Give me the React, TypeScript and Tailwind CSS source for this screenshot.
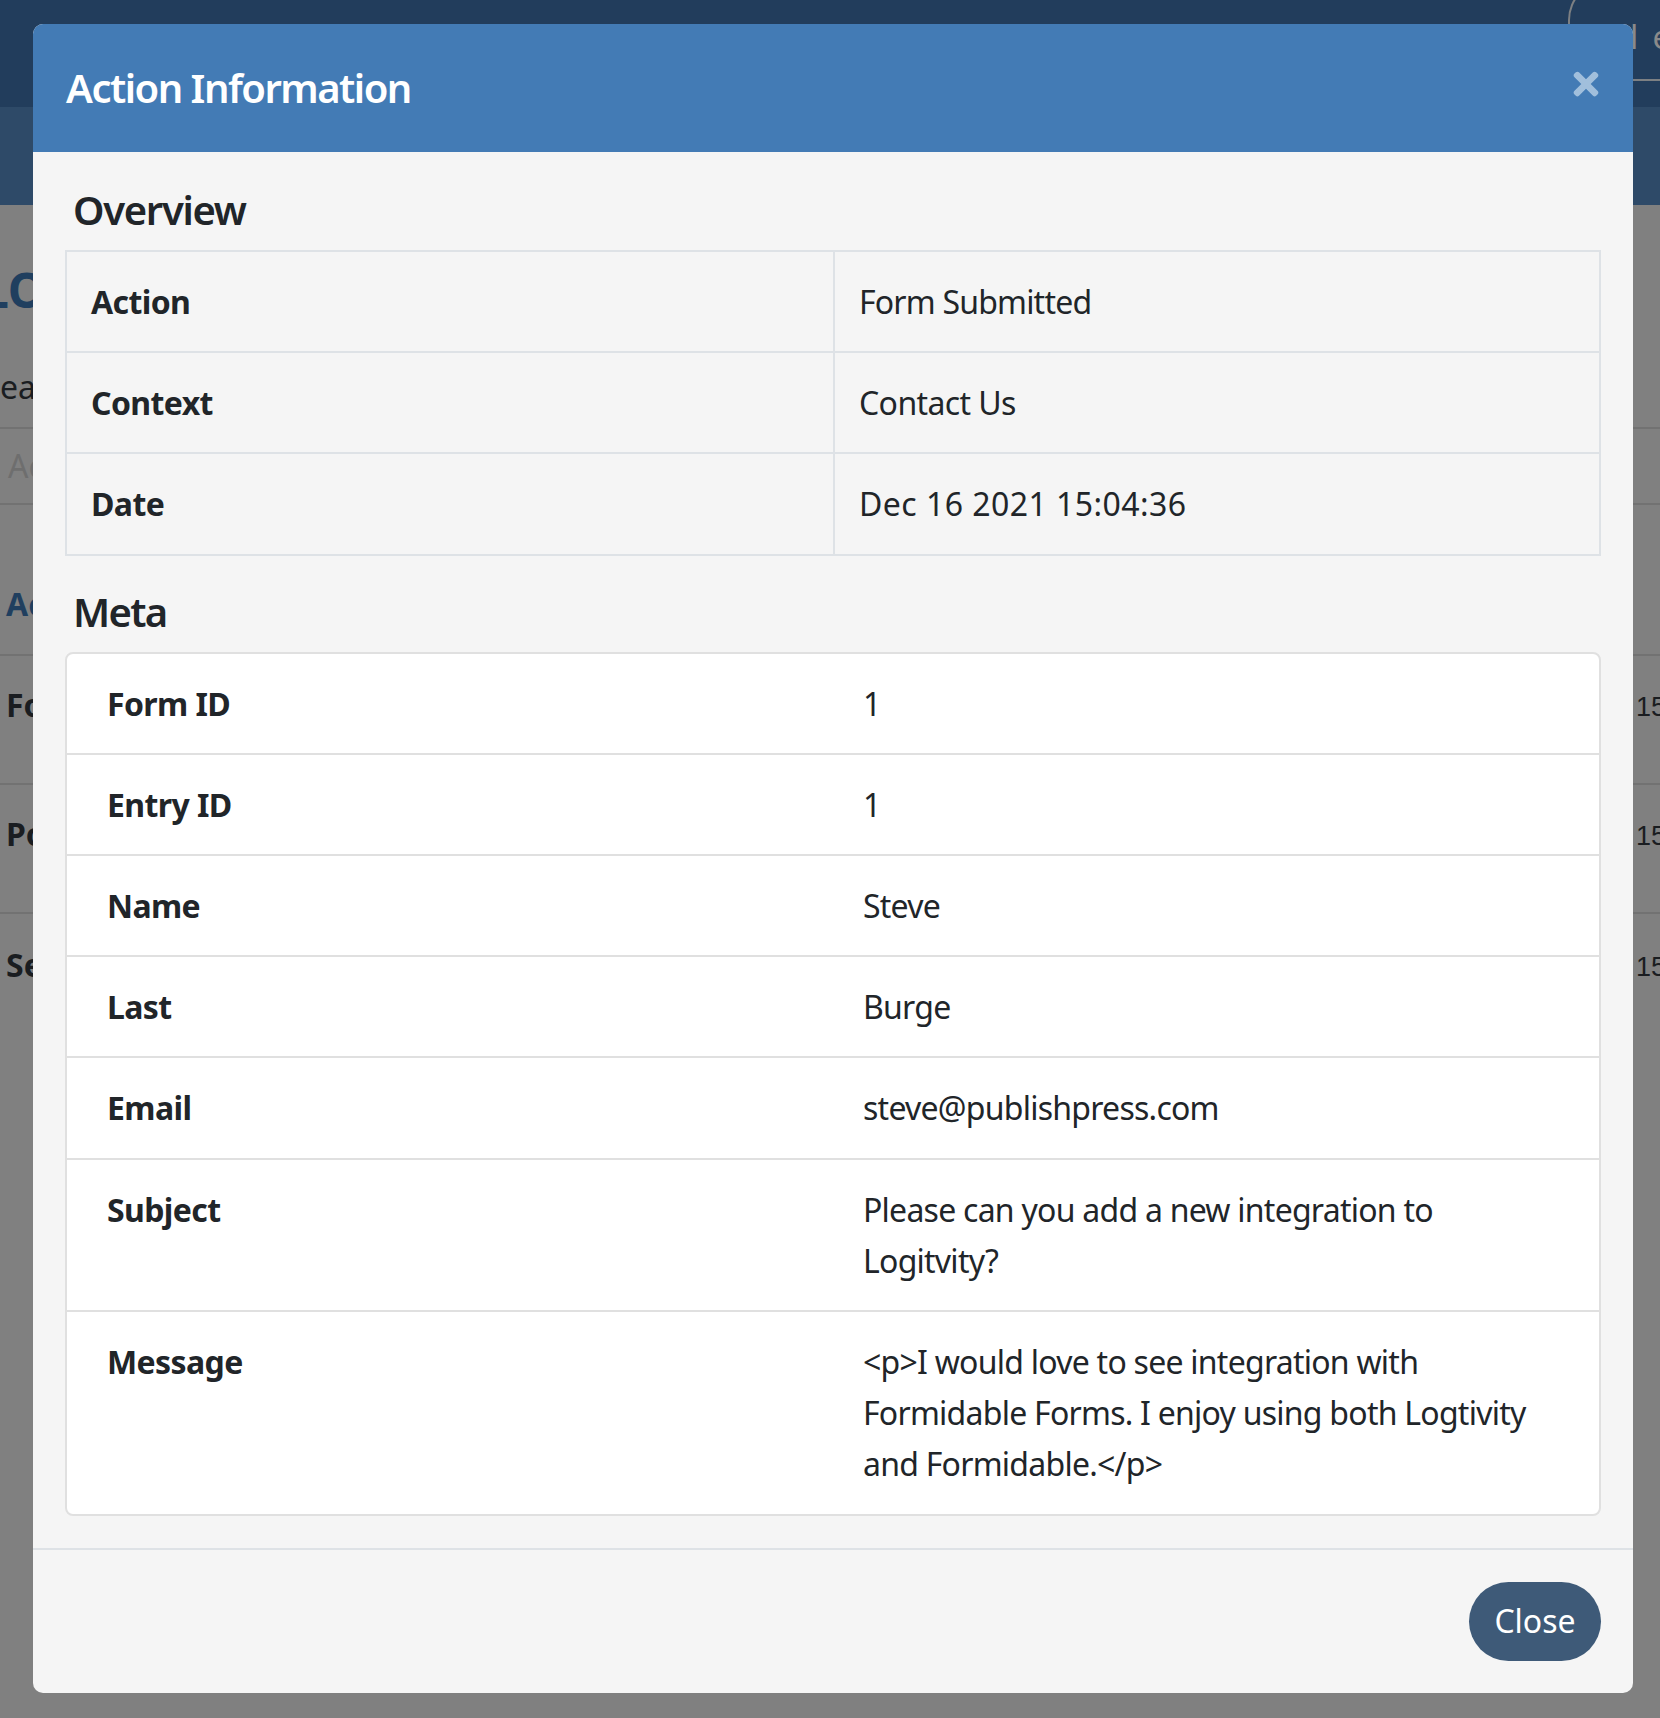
import React from "react";
import { FaTimes } from "react-icons/fa";

const overview: [string, string, string][] = [
  ["Action", "Form Submitted", "tracking-[-0.8px]"],
  ["Context", "Contact Us", "tracking-[-0.6px]"],
  ["Date", "Dec 16 2021 15:04:36", "tracking-[0.45px]"],
];
const meta: [string, string[]][] = [
  ["Form ID", ["1"]],
  ["Entry ID", ["1"]],
  ["Name", ["Steve"]],
  ["Last", ["Burge"]],
  ["Email", ["steve@publishpress.com"]],
  ["Subject", ["Please can you add a new integration to", "Logitvity?"]],
  ["Message", ["<p>I would love to see integration with", "Formidable Forms. I enjoy using both Logtivity", "and Formidable.</p>"]],
];

function BgRow({ left, right }: { left: string; right: string }) {
  return (
    <div className="h-[129px] border-b-2 border-[#727272] flex justify-between items-start pl-[6px] pt-[24px]">
      <span className="font-bold text-[32px] leading-[50px] text-[#1a1d21]">{left}</span>
      <span className="mt-[2px] text-[27px] leading-[50px] text-[#1a1d21] font-['Liberation_Sans',sans-serif] w-[24px] overflow-hidden">{right}</span>
    </div>
  );
}

export default function App() {
  return (
    <div className="relative w-[1660px] h-[1718px] overflow-hidden bg-[#808080] font-['Noto_Sans',sans-serif] text-[#212529]">
      {/* page behind the dialog */}
      <div className="h-[107px] bg-[#223d5c] flex justify-end overflow-hidden">
        <div className="w-[122px] h-[101px] -mt-[20px] -mr-[30px] rounded-tl-[40px] border-2 border-r-0 border-[#7d8083] pl-[39px] pt-[30px] text-[32px] tracking-[3px] leading-[50px] text-[#8a8a8a] whitespace-nowrap overflow-hidden">
          al e
        </div>
      </div>
      <div className="h-[98px] bg-[#2e4a68]" />
      <div className="pt-[53px]">
        <div className="h-[64px] -ml-[18px] text-[48px] leading-[64px] font-bold text-[#203f5f]">LO</div>
        <div className="h-[91px] pt-[24px] text-[32px] leading-[50px] text-[#1a1d21] border-b-2 border-[#727272] mt-[16px]">ea</div>
        <div className="h-[76px] pl-[8px] pt-[12px] text-[32px] leading-[50px] text-[#6e6e6e] border-b-2 border-[#727272]">Ac</div>
        <div className="h-[151px] pl-[6px] pt-[74px] text-[32px] leading-[50px] font-bold text-[#203f5f] border-b-2 border-[#727272]">Ac</div>
        <BgRow left="Fo" right="15" />
        <BgRow left="Po" right="15" />
        <div className="flex justify-between items-start pl-[6px] pt-[26px]">
          <span className="font-bold text-[32px] leading-[50px] text-[#1a1d21]">Se</span>
          <span className="mt-[2px] text-[27px] leading-[50px] text-[#1a1d21] font-['Liberation_Sans',sans-serif] w-[24px] overflow-hidden">15</span>
        </div>
      </div>

      {/* dialog */}
      <div className="absolute left-[33px] top-[24px] w-[1600px] h-[1669px] rounded-[10px] overflow-hidden bg-[#f5f5f5]">
        <div className="h-[128px] bg-[#437bb5] relative flex items-center pl-[33px]">
          <h1 className="text-[40px] leading-[60px] font-semibold tracking-[-1.5px] text-white m-0">Action Information</h1>
          <FaTimes className="absolute right-[29px] top-[42px] text-[#a1bfdc]" size={36} />
        </div>

        <div className="pl-[32px] pr-[32px]">
          <h2 className="h-[98px] pl-[8px] flex items-end pb-[12px] text-[40px] leading-[56px] font-semibold tracking-[-1.3px]">Overview</h2>
          <div className="border-2 border-[#dee2e6] grid grid-cols-[768px_1fr]">
            {overview.map(([k, v, t], i) => (
              <React.Fragment key={k}>
                <div className={`py-[24px] pl-[24px] text-[32px] leading-[51.2px] font-bold tracking-[-0.6px] border-r-2 border-[#dee2e6] ${i < 2 ? "border-b-2" : ""}`}>{k}</div>
                <div className={`py-[24px] pl-[24px] text-[32px] leading-[51.2px] border-[#dee2e6] ${t} ${i < 2 ? "border-b-2" : ""}`}>{v}</div>
              </React.Fragment>
            ))}
          </div>

          <h2 className="h-[96px] pl-[8px] flex items-end pb-[12px] text-[40px] leading-[56px] font-semibold tracking-[-1.7px]">Meta</h2>
          <div className="border-2 border-[#e0e0e0] rounded-[8px] bg-white">
            {meta.map(([k, lines], i) => (
              <div key={k} className={`flex py-[24px] ${i < meta.length - 1 ? "border-b-2 border-[#e0e0e0]" : ""}`}>
                <div className="w-[796px] pl-[40px] text-[32px] leading-[51.2px] font-bold tracking-[-0.6px]">{k}</div>
                <div className="flex-1 text-[32px] leading-[51.2px] tracking-[-0.75px]">
                  {lines.map((l) => (
                    <div key={l}>{l}</div>
                  ))}
                </div>
              </div>
            ))}
          </div>
        </div>

        <div className="mt-[32px] border-t-2 border-[#dee2e6] pt-[32px] pr-[32px] flex justify-end">
          <button className="w-[132px] h-[79px] rounded-full bg-[#3e5a78] text-white text-[32px] leading-[48px]">Close</button>
        </div>
      </div>
    </div>
  );
}
